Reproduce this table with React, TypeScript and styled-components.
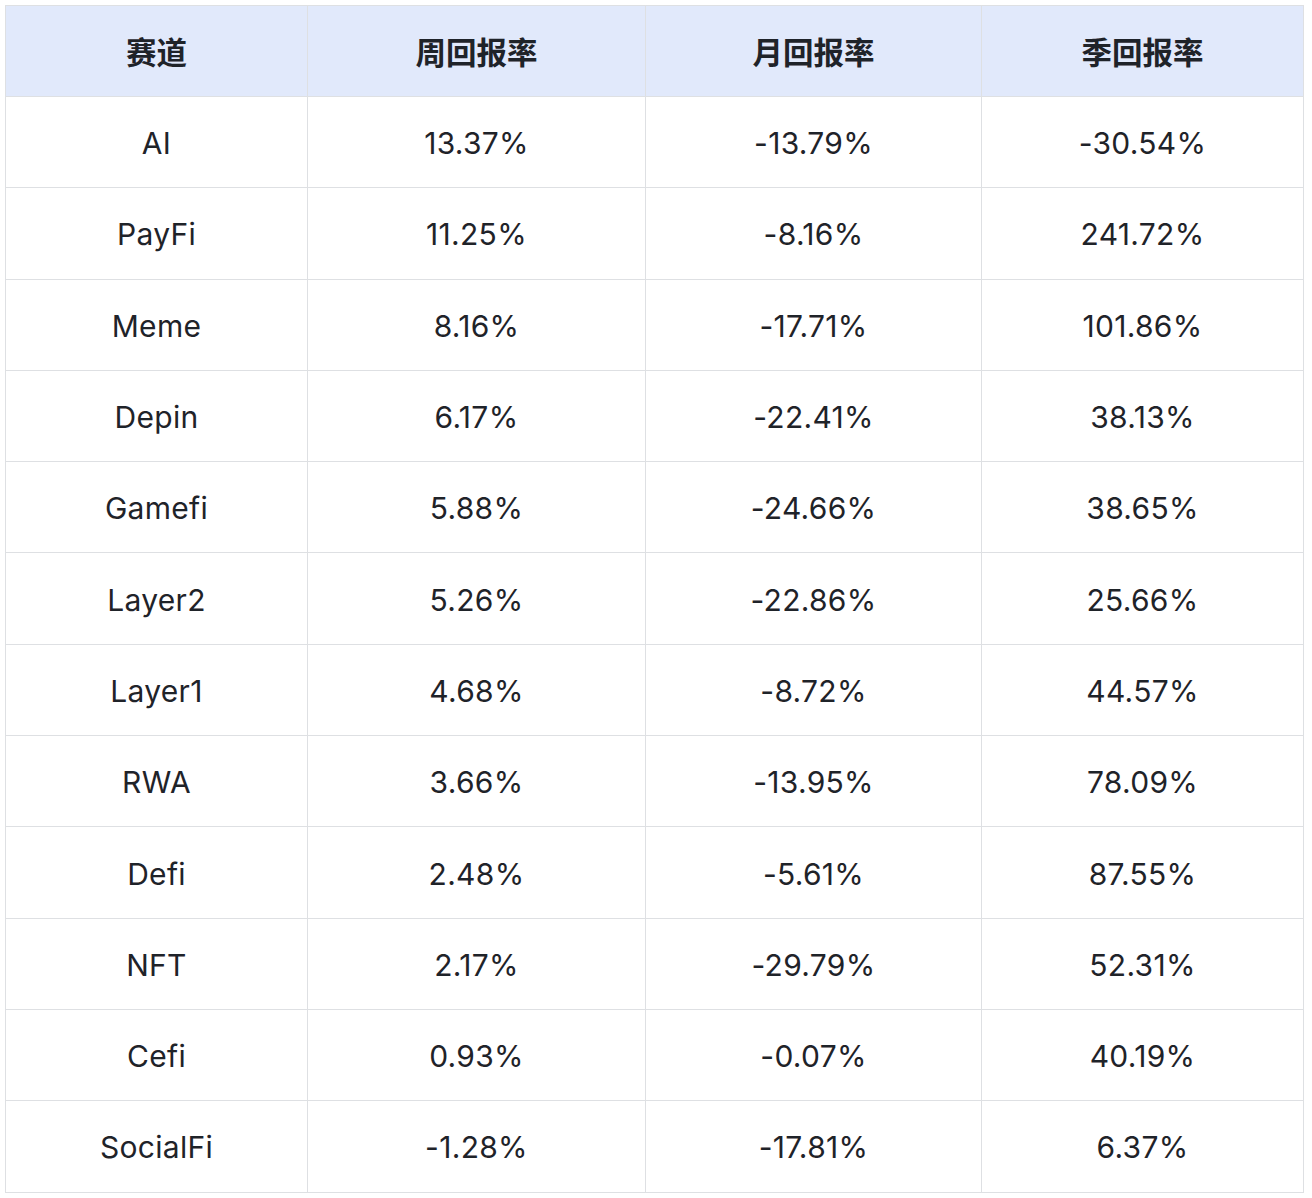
import React from "react";
import styled, { createGlobalStyle } from "styled-components";

const GlobalStyle = createGlobalStyle`
  html, body {
    margin: 0;
    padding: 0;
    background: #ffffff;
  }
  body {
    font-family: Inter, "Noto Sans CJK SC", sans-serif;
    color: #1f2329;
  }
`;

const Page = styled.div`
  padding: 5px 9px 6px 5px;
`;

const Table = styled.table`
  width: 1298px;
  border-collapse: collapse;
  table-layout: fixed;
  border: 1px solid #dee0e3;
`;

const Col = styled.col<{ $width: number }>`
  width: ${(p) => p.$width}px;
`;

const HeadCell = styled.th`
  height: 90px;
  padding: 0;
  background: #e1e9fb;
  border: 1px solid #dee0e3;
  font-size: 30.5px;
  font-weight: 700;
  text-align: center;
  vertical-align: middle;
  color: #1f2329;
`;

const Cell = styled.td`
  height: 88.3px;
  padding: 2px 0 0;
  border: 1px solid #dee0e3;
  font-size: 30px;
  letter-spacing: 0.3px;
  font-weight: 400;
  text-align: center;
  vertical-align: middle;
  color: #1f2329;
`;

type Row = [string, string, string, string];

const rows: Row[] = [
  ["AI", "13.37%", "-13.79%", "-30.54%"],
  ["PayFi", "11.25%", "-8.16%", "241.72%"],
  ["Meme", "8.16%", "-17.71%", "101.86%"],
  ["Depin", "6.17%", "-22.41%", "38.13%"],
  ["Gamefi", "5.88%", "-24.66%", "38.65%"],
  ["Layer2", "5.26%", "-22.86%", "25.66%"],
  ["Layer1", "4.68%", "-8.72%", "44.57%"],
  ["RWA", "3.66%", "-13.95%", "78.09%"],
  ["Defi", "2.48%", "-5.61%", "87.55%"],
  ["NFT", "2.17%", "-29.79%", "52.31%"],
  ["Cefi", "0.93%", "-0.07%", "40.19%"],
  ["SocialFi", "-1.28%", "-17.81%", "6.37%"],
];

const headers = ["赛道", "周回报率", "月回报率", "季回报率"];
const widths = [302, 338, 336, 322];

export default function App() {
  return (
    <Page>
      <GlobalStyle />
      <Table>
        <colgroup>
          {widths.map((w, i) => (
            <Col key={i} $width={w} />
          ))}
        </colgroup>
        <thead>
          <tr>
            {headers.map((h) => (
              <HeadCell key={h}>{h}</HeadCell>
            ))}
          </tr>
        </thead>
        <tbody>
          {rows.map((r) => (
            <tr key={r[0]}>
              {r.map((v, i) => (
                <Cell key={i}>{v}</Cell>
              ))}
            </tr>
          ))}
        </tbody>
      </Table>
    </Page>
  );
}
